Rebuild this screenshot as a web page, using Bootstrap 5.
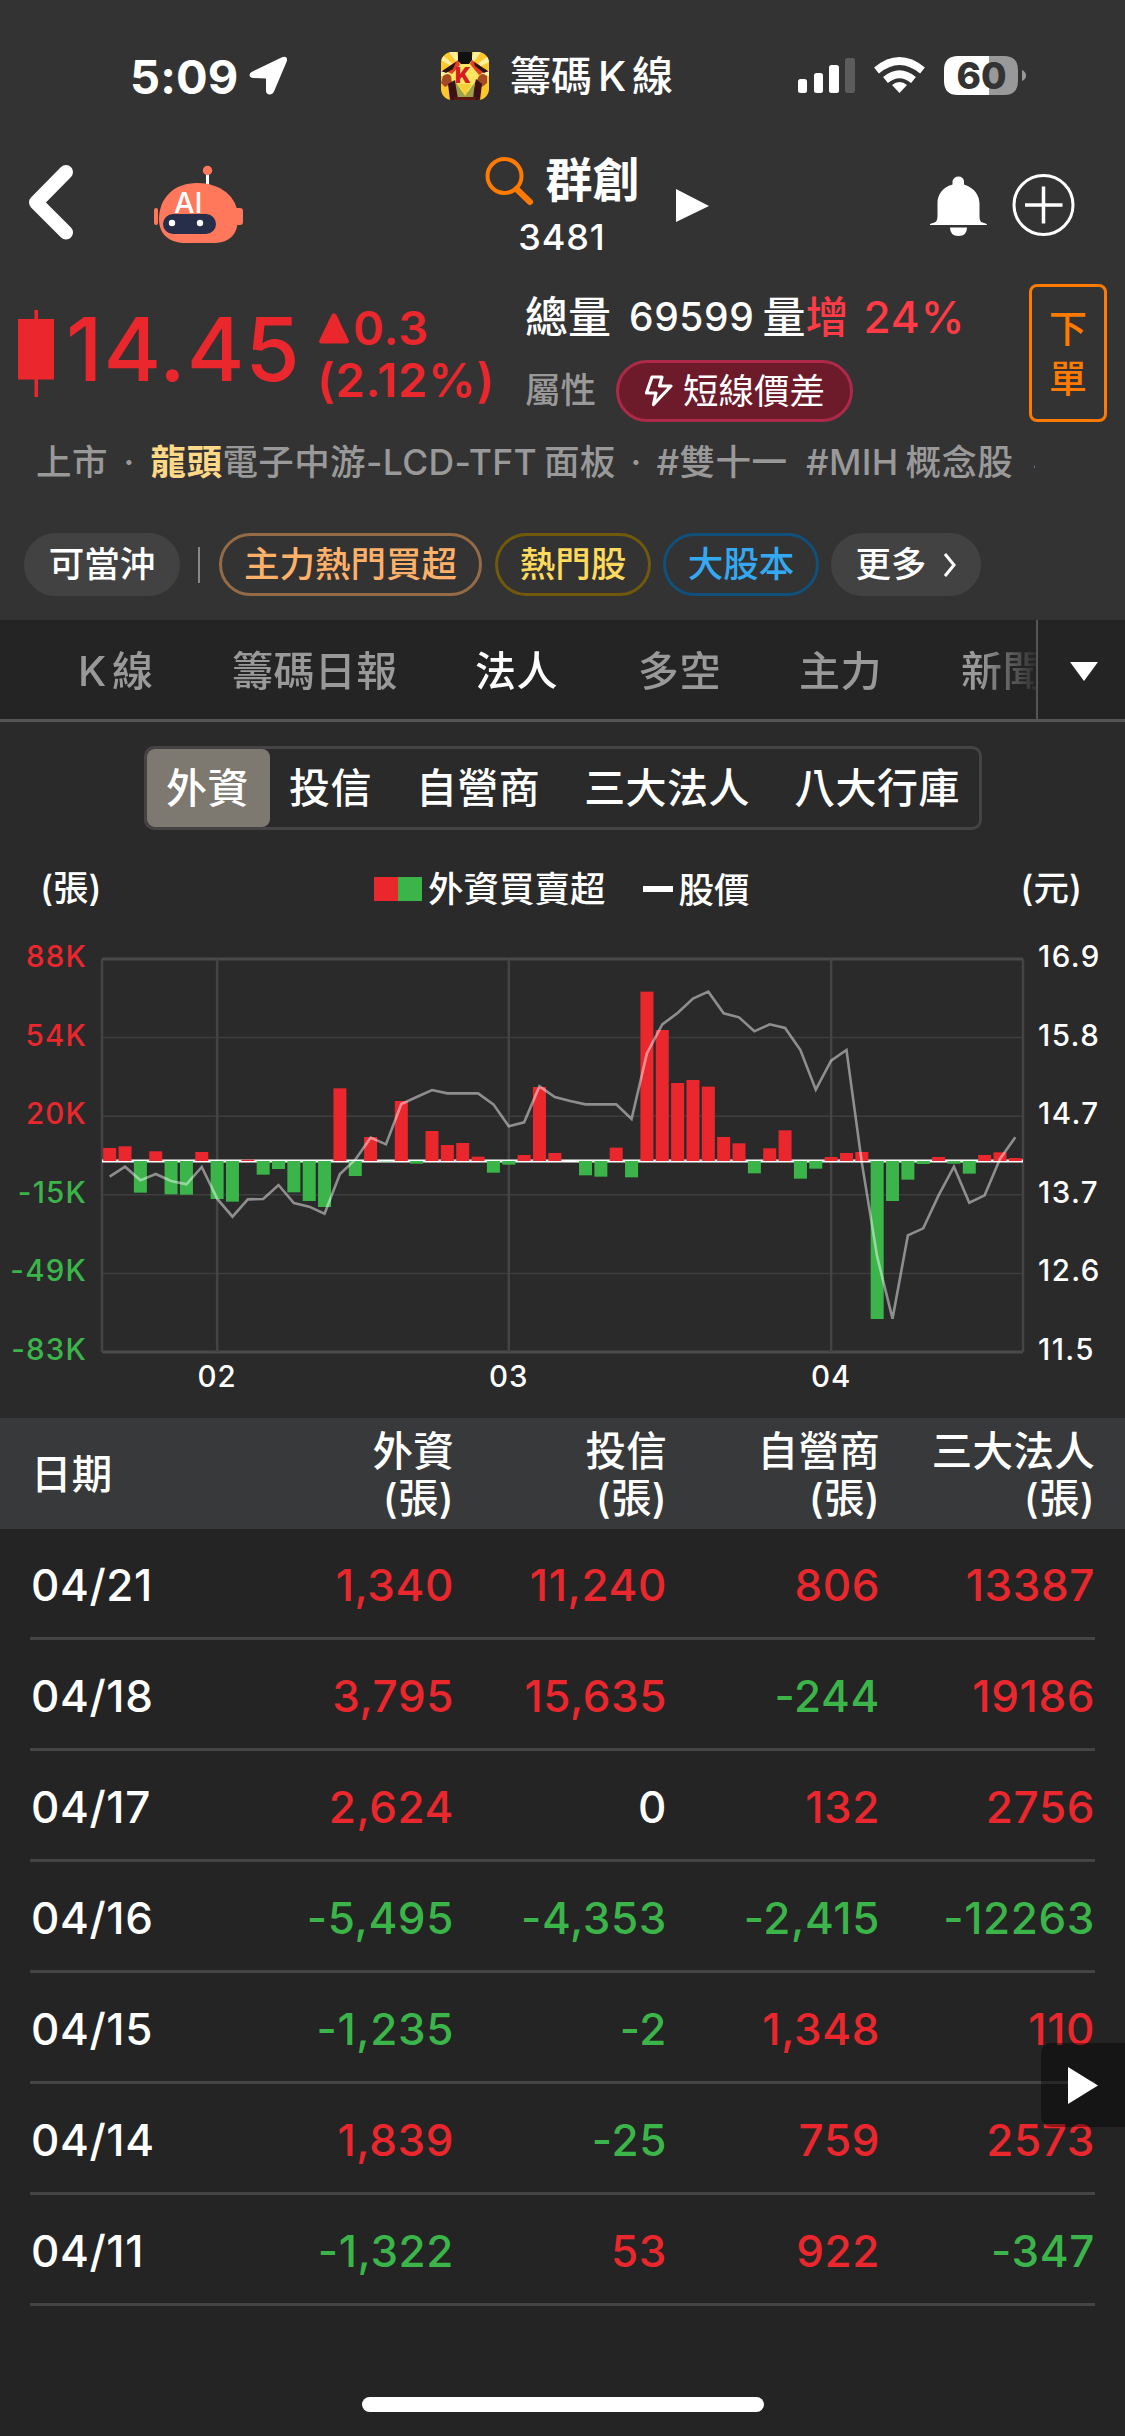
<!DOCTYPE html>
<html lang="zh-Hant" data-bs-theme="dark">
<head>
<meta charset="utf-8">
<meta name="viewport" content="width=device-width, initial-scale=1">
<title>籌碼K線</title>
<link href="https://cdn.jsdelivr.net/npm/bootstrap@5.3.0/dist/css/bootstrap.min.css" rel="stylesheet">
<style>
:root{--up:#eb272e;--down:#3bb54a;--orange:#ff7a00}
body{width:1125px;height:2436px;overflow:hidden;background:#242424;color:#fff;font-family:Inter,"Noto Sans CJK TC",sans-serif;font-weight:500;font-size:36px;line-height:1;font-feature-settings:"calt" 0}
svg{display:block;flex:none}
.up{color:var(--up)}.down{color:var(--down)}
.text-nowrap>*{flex:none}
.top-zone{background:#333;height:620px}
.status-bar{height:148px;padding:3px 97px 0 130px}
.clock{font-size:47px;font-weight:700;width:119px;letter-spacing:.1px;padding-top:1px}
.app-name{font-size:41px;line-height:1.45;margin-left:21px;width:288px;word-spacing:-5px;padding-top:2px}
.title-bar{height:124px;padding-left:29px}
.stock-name{font-size:47px;font-weight:700}
.stock-block{width:160px;margin-left:238px}
.stock-code{font-size:36px;height:36px;letter-spacing:.9px}
.quote{height:166px;padding-left:18px}
.price{font-size:88px;width:235px;margin-left:12px;letter-spacing:.9px}
.change{font-size:47px;font-weight:600;width:208px;line-height:52px;letter-spacing:.9px}
.vol{font-size:43px;height:52px}
.vol>*{line-height:64px}
.vol-num{font-size:39px;letter-spacing:.6px}
.attr{font-size:35.5px}
.style-pill{width:237px;height:62px;border:3px solid #ac2a47;background:#6d1a2a;font-weight:400}
.order-btn{width:78px;height:138px;border:3px solid var(--orange);border-radius:8px;color:var(--orange);font-size:38px;font-weight:500;line-height:50px;background:none;padding:0}
.tags-line{height:44px;width:1035px;padding-left:36px;font-size:35.5px;line-height:44px;color:#999;overflow:hidden;word-spacing:-3px;letter-spacing:.38px}
.leader{color:#ffd888;font-weight:700}
.chips{height:63px;padding-left:24px;font-size:35.5px}
.chip{height:63px;border-radius:32px;width:156px;display:flex;align-items:center;justify-content:center;border:3px solid #424242;background:#424242;padding-top:1px}
.chip-main{width:263px;color:#ffb169;border-color:#956b47;background:none}
.chip-hot{color:#ffda5c;border-color:#71590c;background:none}
.chip-cap{color:#34a9f2;border-color:#10507b;background:none}
.chip-sep{width:2px;height:36px;background:#888}
.tab-strip{height:102px;border-bottom:3px solid #555;background:#242424;font-size:41px;letter-spacing:.4px;color:#999}
.tab-scroll{width:1036px;padding:4px 0 0 78px;overflow:hidden;-webkit-mask-image:linear-gradient(90deg,#000 980px,transparent 1042px);mask-image:linear-gradient(90deg,#000 980px,transparent 1042px)}
.chart-zone{background:#2a2a2a;height:696px}
.seg{width:838px;height:84px;border:3px solid #444;border-radius:10px;font-size:41px;letter-spacing:.4px;margin-left:144px}
.seg>span{padding-right:2px}
.seg-on{background:#7d7870;border-radius:8px;width:123px}
.legend-row{height:45px;font-size:35.5px}
.head-row{background:#38393b;height:111px;font-size:40.5px;letter-spacing:.3px;line-height:47px;padding:2px 31px 0 31px}
.data-row{height:111px;border-bottom:3px solid #444;margin:0 30px;padding:4px 0 0 1px;font-size:44px;letter-spacing:.6px}
.c0{width:210px}.c1{width:213px}.c2{width:213px}.c3{width:213px}.c4{width:215px}
.side-btn{right:0;top:2043px;width:84px;height:84px;border-radius:10px 0 0 10px;background:rgba(0,0,0,.4)}
.home-bar{width:402px;height:15px;border-radius:8px;background:#fff;margin:0 auto}
.axis{font-size:29.5px;font-family:Inter,sans-serif;font-weight:500}
</style>
</head>
<body class="position-relative">
<header class="top-zone">
  <div class="status-bar d-flex align-items-center text-nowrap">
    <span class="clock">5:09</span>
    <svg width="39" height="39" viewBox="0 0 39 39"><path d="M3.5 15.5 33 1.2q6-1.800 4.800 4L25 35.500q-1.500 3.200-4.800 3Q17 38 17 34.500V22.600L4.500 22q-4-.500-4-3 0-2.300 3-3.500z" fill="#fff"/></svg>
    <svg width="48" height="48" viewBox="0 0 48 48" style="margin-left:153px"><defs><clipPath id="ico"><rect width="48" height="48" rx="11"/></clipPath></defs><g clip-path="url(#ico)"><rect width="48" height="48" fill="#fdc82c"/><path d="M24 22 0 8V2l24 20L8 0h7l9 22L33 0h7L24 22 48 3v7L24 22 0 18v6zM24 22l24-4v6z" fill="#fff0a0"/><path d="M7 19 17 9 31 9 42 19 38 34 31 40 17 40 10 32z" fill="#ffe660"/><path d="M0 20 17 8l2 5-8 9-4-2zM48 20 31 8l-2 4 9 11 5-3z" fill="#e63b28"/><path d="M1 19 15 10l-3 7-7 4zM47 19 33 10l1 4 9 7z" fill="#241512"/><path d="M17 0h14v8l-3 4h-8l-3-3z" fill="#111"/><path d="M2 24q5-4 8 0l1 7-7 4-4-4zM46 24q-5-4-8 0l-3 6 6 5 5-4z" fill="#a54a24"/><path d="M7 32 14 28 19 48H9zM41 32 35 27 30 48h9z" fill="#3b1117"/><path d="M14 29 24 44 34 30 32 47H17z" fill="#9da04b"/><path d="M17 32 24 43l7-11z" fill="#f9cf38"/><path d="M13 45h22v3H13z" fill="#5b160d"/><text x="22" y="31" text-anchor="middle" font-family="Inter" font-size="21" font-weight="900" fill="#d51c22">K</text></g></svg>
    <span class="app-name">籌碼 K 線</span>
    <svg width="228" height="40" viewBox="799 56 228 40"><g fill="#fff"><rect x="799" y="79" width="9" height="14" rx="2.500"/><rect x="815" y="73" width="9" height="20" rx="2.500"/><rect x="830" y="65" width="10" height="28" rx="2.500"/><rect x="846" y="58" width="10" height="35" rx="2.500" fill="#5c5c5c"/></g>
      <g fill="none" stroke="#fff" stroke-width="7.500"><path d="M877.500 70.500Q900.500 51.500 923.500 70.500"/><path d="M886.500 80Q900.500 68.500 914.500 80"/></g><path d="M893 85q7.500-6 15 0l-7.500 8z" fill="#fff"/>
      <path d="M990 56h15q14 0 14 14v11q0 14-14 14h-15z" fill="#999"/><path d="M990 56h-31q-14 0-14 14v11q0 14 14 14h31z" fill="#fff"/><path d="M1023 70q4 2 4 5.500t-4 5.500z" fill="#999"/>
      <text x="982.500" y="89" text-anchor="middle" font-size="37" font-weight="800" fill="#333" font-family="Inter">60</text></svg>
  </div>
  <div class="title-bar d-flex text-nowrap">
    <svg width="44" height="75" viewBox="0 0 44 75" style="margin-top:17px"><path d="M37 7 7 37.500 37 67.500" fill="none" stroke="#fff" stroke-width="14" stroke-linecap="round" stroke-linejoin="round"/></svg>
    <svg width="90" height="79" viewBox="0 0 90 79" style="margin:17px 0 0 81px"><path d="M53.500 8v13" stroke="#fff" stroke-width="3"/><circle cx="53.500" cy="5.500" r="4.700" fill="#ff785c"/><rect x="0" y="43" width="4" height="17" rx="2" fill="#ff785c"/><rect x="78" y="43" width="11" height="17" rx="3" fill="#ff785c"/><path d="M43 18C20 18 5 33 5 54 5 70 16 78 32 78H62C76 77 84 69 84 53 84 31 66 18 43 18z" fill="#ff785c"/><rect x="9" y="49" width="53" height="20" rx="10" fill="#262e49"/><circle cx="18" cy="58" r="3.200" fill="#fff"/><circle cx="46" cy="58" r="3.200" fill="#fff"/><text x="20" y="48" font-size="29" font-weight="500" fill="#fff" font-family="Inter">AI</text></svg>
    <div class="stock-block d-flex flex-column align-items-center">
      <div class="d-flex align-items-center" style="height:67px"><svg width="50" height="50" viewBox="0 0 50 50"><circle cx="19.500" cy="19" r="17" fill="none" stroke="#ff7a00" stroke-width="4"/><path d="M31.500 32 45 45" stroke="#ff7a00" stroke-width="6" stroke-linecap="round"/></svg><span class="stock-name" style="margin:0 0 5px 11px">群創</span></div>
      <div class="stock-code d-flex align-items-center mt-1">3481</div>
    </div>
    <svg width="33" height="34" viewBox="0 0 33 34" style="margin:41px 0 0 34px"><path d="M0 0 33 17 0 33z" fill="#fff"/></svg>
    <svg width="57" height="61" viewBox="0 0 57 61" style="margin:28px 0 0 221px"><path d="M22.500 8.500V5q1.500-4.500 6-4.500T34 5v3.500C45 12 49.500 20 49.500 28v12q0 6 3 6.500l3 1q2 .800 1.500 1.500H0q-.500-1 1.500-1.500l3-1q3-1 3-6.500V27C7.500 19 12 11.500 22.500 8.500zM20 51.500h17q0 8.500-8.500 8.500T20 51.500z" fill="#fff"/></svg>
    <svg width="63" height="63" viewBox="0 0 63 63" style="margin:26px 0 0 25px"><circle cx="31.500" cy="31" r="29.500" fill="none" stroke="#fff" stroke-width="3"/><path d="M31.500 12.500v37M13 31h37.500" stroke="#fff" stroke-width="3.500"/></svg>
  </div>
  <div class="quote d-flex text-nowrap">
    <svg width="36" height="87" viewBox="0 0 36 87" style="margin-top:38px"><path d="M0 9h36v60.500H0zM16.500 0h3.500v87h-3.500z" fill="#eb272e"/></svg>
    <div class="price up" style="padding-top:33px">14.45</div>
    <div class="change up" style="padding-top:30px;margin-left:16px"><div class="d-flex"><svg width="30" height="31" viewBox="0 0 30 31" style="margin:11px 4px 0 2px"><path d="M12.500 2q2.500-3.500 5 0L29.500 27q1.500 3.500-2 3.500h-25Q-1 30.500.500 27z" fill="#eb272e"/></svg><span>0.3</span></div><div>(2.12%)</div></div>
    <div style="width:504px">
      <div class="vol d-flex align-items-center" style="margin-top:19px"><span>總量</span><span class="vol-num" style="margin-left:18px">69599</span><span style="margin-left:8px">量</span><span style="color:#ff3b45">增</span><span style="color:#ff3b45;margin-left:15px;font-size:44px;letter-spacing:1px">24%</span></div>
      <div class="attr d-flex align-items-center" style="margin-top:17px"><span style="color:#999;width:91px">屬性</span><div class="style-pill rounded-pill d-flex align-items-center"><svg width="30" height="32" viewBox="0 0 30 32" style="margin:0 9px 0 25px"><path d="M8 2H18L15.500 11H27L9.500 29.500 12 18H2.500z" fill="none" stroke="#fff" stroke-width="3.200" stroke-linejoin="round"/></svg><span style="margin-top:2px">短線價差</span></div></div>
    </div>
    <button class="order-btn" style="margin-top:12px">下<br>單</button>
  </div>
  <div class="tags-line text-nowrap" style="margin-top:3px">上市<span style="margin:0 9px"> · </span><span class="leader">龍頭</span>電子中游-LCD-TFT 面板<span style="margin:0 8px"> · </span>#雙十一<span style="margin-left:5px">&nbsp; #MIH 概念股</span><span style="margin-left:7px">&nbsp; #</span></div>
  <div class="chips d-flex align-items-center text-nowrap" style="margin-top:48px">
    <span class="chip">可當沖</span><span class="chip-sep" style="margin:0 19px 0 18px"></span><span class="chip chip-main">主力熱門買超</span><span class="chip chip-hot" style="margin-left:13px">熱門股</span><span class="chip chip-cap" style="margin-left:12px">大股本</span><span class="chip" style="margin-left:12px;width:150px">更多<svg width="14" height="26" viewBox="0 0 14 26" style="margin-left:16px"><path d="M2 2 11 13 2 24" fill="none" stroke="#fff" stroke-width="3"/></svg></span>
  </div>
</header>
<nav class="tab-strip d-flex">
  <div class="tab-scroll d-flex align-items-center text-nowrap"><span style="width:154px;word-spacing:-6px">K 線</span><span style="width:243px">籌碼日報</span><span class="text-white" style="width:163px">法人</span><span style="width:161px">多空</span><span style="width:162px">主力</span><span>新聞</span></div>
  <div class="d-flex align-items-center justify-content-center flex-fill" style="border-left:2px solid #555"><svg width="28" height="19" viewBox="0 0 28 19" style="margin:3px 0 0 4px"><path d="M0 0h28L14 19z" fill="#fff"/></svg></div>
</nav>
<main>
  <section class="chart-zone" style="padding-top:24px">
    <div class="seg d-flex align-items-stretch text-nowrap"><span class="seg-on d-flex align-items-center justify-content-center">外資</span><span class="d-flex align-items-center justify-content-center" style="width:123px">投信</span><span class="d-flex align-items-center justify-content-center" style="width:172px">自營商</span><span class="d-flex align-items-center justify-content-center" style="width:206px">三大法人</span><span class="d-flex align-items-center justify-content-center" style="width:214px">八大行庫</span></div>
    <div class="legend-row d-flex align-items-center text-nowrap" style="margin-top:36px;padding:0 43px 0 40px"><span style="width:334px">(張)</span><span style="width:24px;height:24px;background:#eb272e"></span><span style="width:24px;height:24px;background:#3bb54a"></span><span style="margin:2px 0 0 6px">外資買賣超</span><span style="width:30px;height:6px;background:#fff;margin:0 6px 0 37px"></span><span class="mt-1">股價</span><span class="ms-auto">(元)</span></div>
    <svg id="chart" width="1125" height="480" viewBox="0 920 1125 480" style="margin-top:9px"></svg>
  </section>
  <section>
    <div class="head-row d-flex align-items-center text-end text-nowrap"><span class="c0 text-start">日期</span><span class="c1">外資<br>(張)</span><span class="c2">投信<br>(張)</span><span class="c3">自營商<br>(張)</span><span class="c4">三大法人<br>(張)</span></div>
    <div id="rows"></div>
  </section>
</main>
<div style="height:91px"></div>
<div class="home-bar"></div>
<button class="side-btn position-absolute border-0 p-0"><svg width="30" height="37" viewBox="0 0 30 37" style="margin-left:27px"><path d="M0 0 30 18.500 0 37z" fill="#fff"/></svg></button>
<script>
// Bar heights (positive = net buy) and price-line positions, in thirds of a pixel
const bars=[39,44,-95,29,-100,-101,27,-114,-122,4,-41,-24,-94,-120,-138,218,-45,72,-1,180,-8,90,48,54,13,-35,-11,18,222,24,0,-43,-47,40,-49,508,393,234,243,223,72,53,-37,38,92,-53,-23,12,24,27,-474,-120,-56,-9,12,-8,-38,18,26,9];
const line=[770,740,781,762,783,793,741,836,890,838,837,795,849,860,881,762,719,653,673,552,531,510,520,520,520,553,619,607,499,531,543,553,553,553,597,400,313,279,236,215,280,292,334,313,324,390,509,422,390,728,1010,1196,946,925,826,740,848,826,717,652];
const L=102,R=1023,T=959,B=1352,Z=1161,P=(R-L)/60,cx=i=>L+P*(i+.5);
let s='';
for(let k=0;k<6;k++){const y=T+k*78.6,e=k==0||k==5;s+=`<path d="M${L} ${y}H${R}" stroke="#${e?'4a4a4a':'3e3e3e'}" stroke-width="${e?3:1.5}"/>`}
[L,cx(7),cx(26),cx(47),R].forEach(x=>s+=`<path d="M${x} ${T}V${B}" stroke="#444" stroke-width="2.5"/>`);
s+=`<path d="M${L} ${Z}H${R}" stroke="#fff" stroke-width="3"/>`;
bars.forEach((b,i)=>{const h=Math.abs(b)/3;s+=`<rect x="${cx(i)-6.5}" y="${b>0?Z-h:Z}" width="13" height="${h}" fill="${b>0?'#eb272e':'#3bb54a'}"/>`});
s+=`<polyline points="${line.map((y,i)=>cx(i)+','+(920+y/3)).join(' ')}" fill="none" stroke="#fff" stroke-opacity=".47" stroke-width="2.6"/>`;
['88K','54K','20K','-15K','-49K','-83K'].forEach((t,k)=>s+=`<text class="axis" x="87" y="${967+k*78.6}" text-anchor="end" letter-spacing="1.2" fill="${k<3?'#eb272e':'#3bb54a'}">${t}</text>`);
['16.9','15.8','14.7','13.7','12.6','11.5'].forEach((t,k)=>s+=`<text class="axis" x="1038" y="${967+k*78.6}" letter-spacing="1.4" fill="#fff">${t}</text>`);
[['02',7],['03',26],['04',47]].forEach(([t,i])=>s+=`<text class="axis" x="${cx(i)}" y="1387" text-anchor="middle" letter-spacing="1" fill="#fff">${t}</text>`);
document.getElementById('chart').innerHTML=s;
const data=[['04/21','1,340','11,240','806','13387'],['04/18','3,795','15,635','-244','19186'],['04/17','2,624','0','132','2756'],['04/16','-5,495','-4,353','-2,415','-12263'],['04/15','-1,235','-2','1,348','110'],['04/14','1,839','-25','759','2573'],['04/11','-1,322','53','922','-347']];
document.getElementById('rows').innerHTML=data.map(r=>'<div class="data-row d-flex align-items-center text-end">'+r.map((v,i)=>`<span class="c${i} ${i==0?'text-start':v=='0'?'':v[0]=='-'?'down':'up'}">${v}</span>`).join('')+'</div>').join('');
</script>
<script src="https://cdn.jsdelivr.net/npm/bootstrap@5.3.0/dist/js/bootstrap.bundle.min.js"></script>
</body>
</html>
